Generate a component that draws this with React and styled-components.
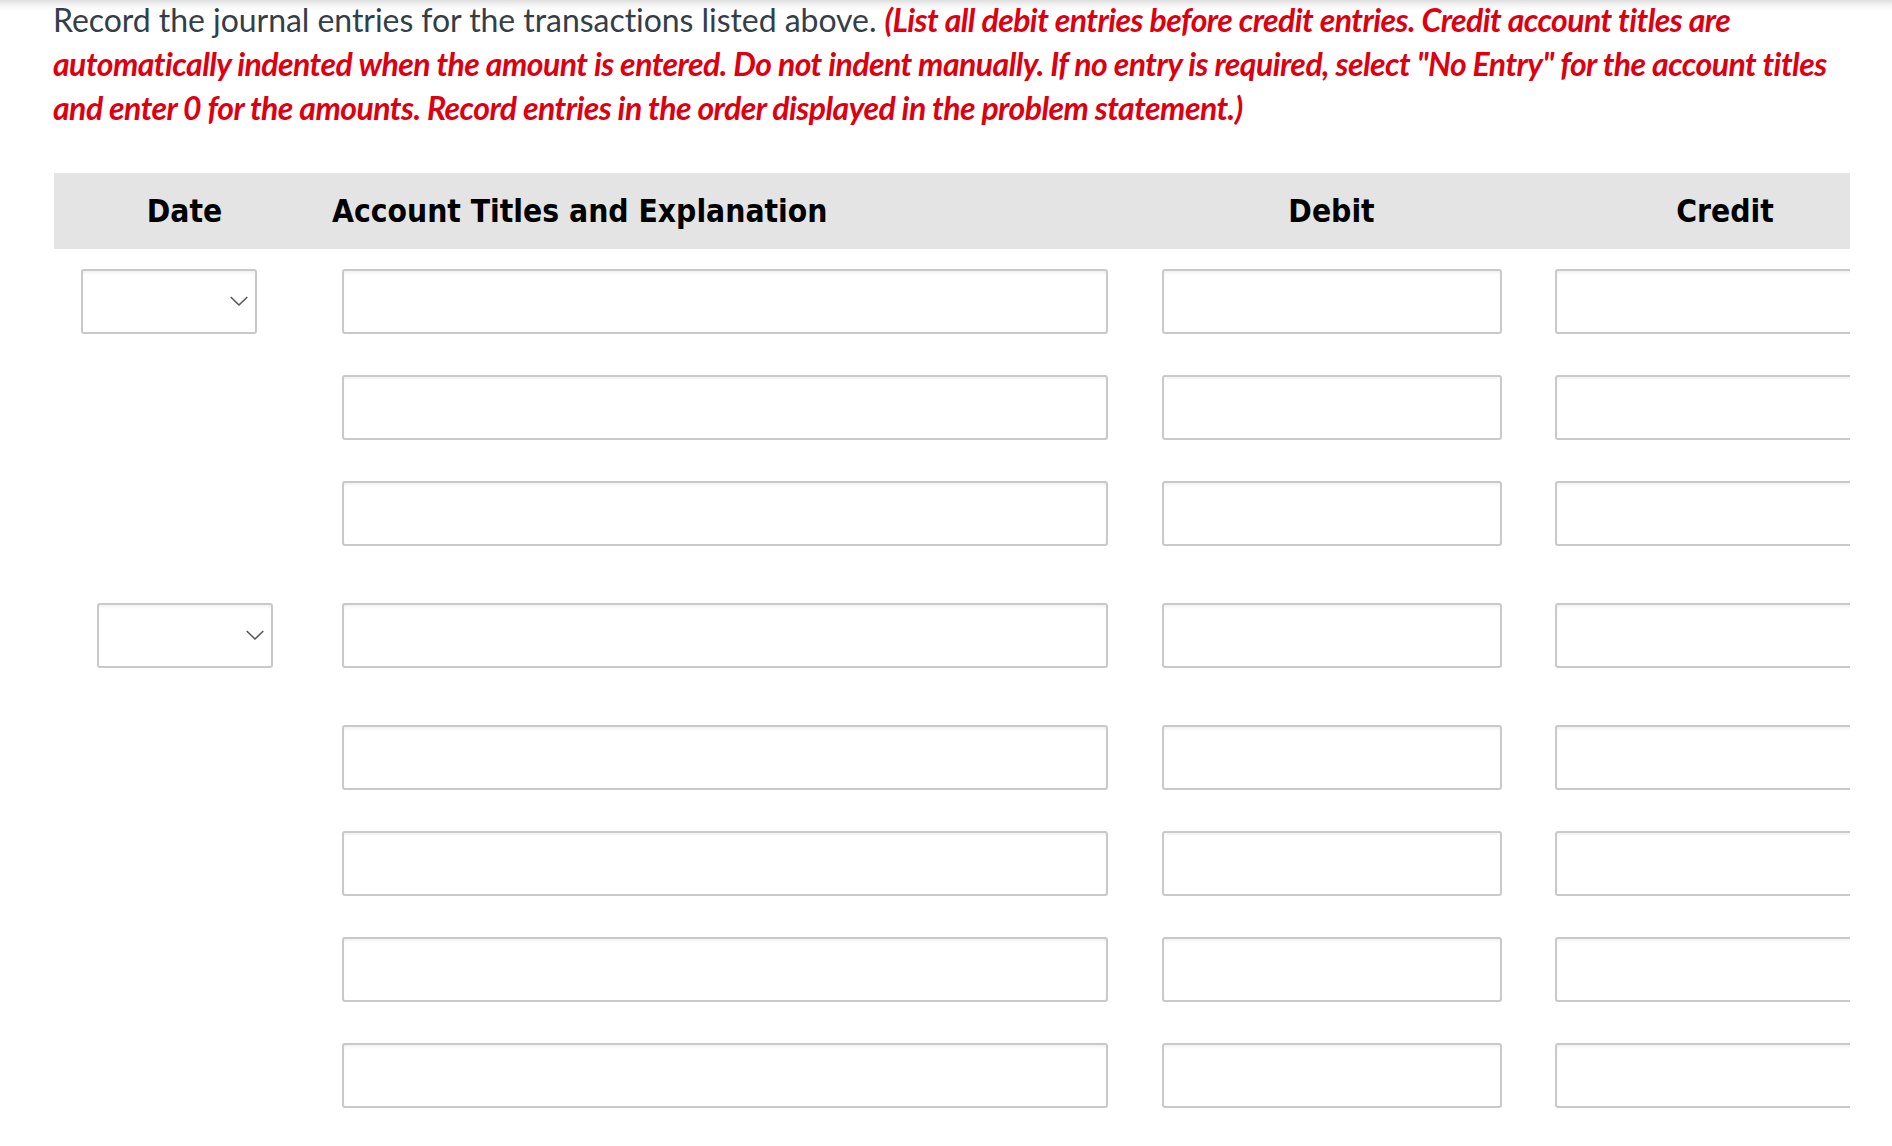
import React from "react";
import styled, { createGlobalStyle } from "styled-components";

const Global = createGlobalStyle`
  html, body {
    margin: 0;
    padding: 0;
  }
  body {
    background: linear-gradient(to bottom, #dedede 0px, #f4f4f4 5px, #ffffff 11px) no-repeat, #ffffff;
    background-size: 100% 12px;
    background-color: #ffffff;
    font-family: "Lato", "Open Sans", sans-serif;
  }
  * { box-sizing: border-box; }
`;

const Page = styled.div`
  width: 1892px;
  min-height: 1146px;
  padding: 0 42px 0 54px;
  overflow: hidden;
`;

const Instructions = styled.p`
  margin: -2px 0 0 -1px;
  font-family: "Lato", "Open Sans", sans-serif;
  font-size: 32px;
  line-height: 44px;
  color: #333e48;
  letter-spacing: -0.05px;
`;

const Emphasis = styled.span`
  color: #dd0011;
  font-weight: 700;
  font-style: italic;
  letter-spacing: -0.55px;
`;

const Table = styled.div`
  margin-top: 43px;
  width: 1796px;
  overflow: hidden;
`;

const Grid = styled.div`
  display: grid;
  grid-template-columns: 261px 820px 393px 394px;
  width: 1868px;
`;

const HeaderCell = styled.div`
  background: #e4e4e4;
  height: 76px;
  line-height: 76px;
  font-family: "DejaVu Sans Condensed", "DejaVu Sans", sans-serif;
  font-weight: 700;
  font-size: 31.5px;
  color: #000;
  text-align: ${(p) => p.$align || "center"};
  padding-left: ${(p) => p.$pad || 0}px;
  white-space: nowrap;
`;

const Cell = styled.div`
  padding: ${(p) => p.$top}px 27px 0 ${(p) => 27 + (p.$indent || 0)}px;
  display: flex;
  align-items: flex-start;
`;

const Field = styled.input`
  display: block;
  width: ${(p) => p.$w}px;
  height: 65px;
  border: 2px solid #c9c9c9;
  border-radius: 3px;
  background: #fff;
  box-shadow: inset 0 3px 3px -1px rgba(0, 0, 0, 0.06);
  font-family: "Lato", sans-serif;
  font-size: 22px;
  padding: 0 10px;
  outline: none;
  flex-shrink: 0;
`;

const DateSelect = styled.div`
  width: 176px;
  height: 65px;
  border: 2px solid #c9c9c9;
  border-radius: 3px;
  background: #fff;
  box-shadow: inset 0 3px 3px -1px rgba(0, 0, 0, 0.06);
  display: flex;
  align-items: center;
  justify-content: flex-end;
  padding-right: 7px;
  cursor: pointer;
`;

const Chevron = () => (
  <svg width="18" height="11" viewBox="0 0 18 11" aria-hidden="true">
    <polyline
      points="1.2,1.5 9,9 16.8,1.5"
      fill="none"
      stroke="#5a5a5a"
      strokeWidth="1.7"
      strokeLinecap="round"
      strokeLinejoin="round"
    />
  </svg>
);

const rows = [
  { top: 20, date: true, indent: 0 },
  { top: 41 },
  { top: 41 },
  { top: 57, date: true, indent: 16 },
  { top: 57 },
  { top: 41 },
  { top: 41 },
  { top: 41 },
];

export default function App() {
  return (
    <>
      <Global />
      <Page>
        <Instructions>
          Record the journal entries for the transactions listed above.{" "}
          <Emphasis>
            (List all debit entries before credit entries. Credit account titles are
            automatically indented when the amount is entered. Do not indent manually. If no
            entry is required, select "No Entry" for the account titles and enter 0 for the
            amounts. Record entries in the order displayed in the problem statement.)
          </Emphasis>
        </Instructions>
        <Table>
          <Grid>
            <HeaderCell>Date</HeaderCell>
            <HeaderCell $align="left" $pad={17}>
              Account Titles and Explanation
            </HeaderCell>
            <HeaderCell>Debit</HeaderCell>
            <HeaderCell>Credit</HeaderCell>
            {rows.map((r, i) => (
              <React.Fragment key={i}>
                <Cell $top={r.top} $indent={r.indent}>
                  {r.date ? (
                    <DateSelect role="combobox" aria-label="Date">
                      <Chevron />
                    </DateSelect>
                  ) : null}
                </Cell>
                <Cell $top={r.top}>
                  <Field $w={766} aria-label="Account Titles and Explanation" />
                </Cell>
                <Cell $top={r.top}>
                  <Field $w={340} aria-label="Debit" />
                </Cell>
                <Cell $top={r.top}>
                  <Field $w={340} aria-label="Credit" />
                </Cell>
              </React.Fragment>
            ))}
          </Grid>
        </Table>
      </Page>
    </>
  );
}
